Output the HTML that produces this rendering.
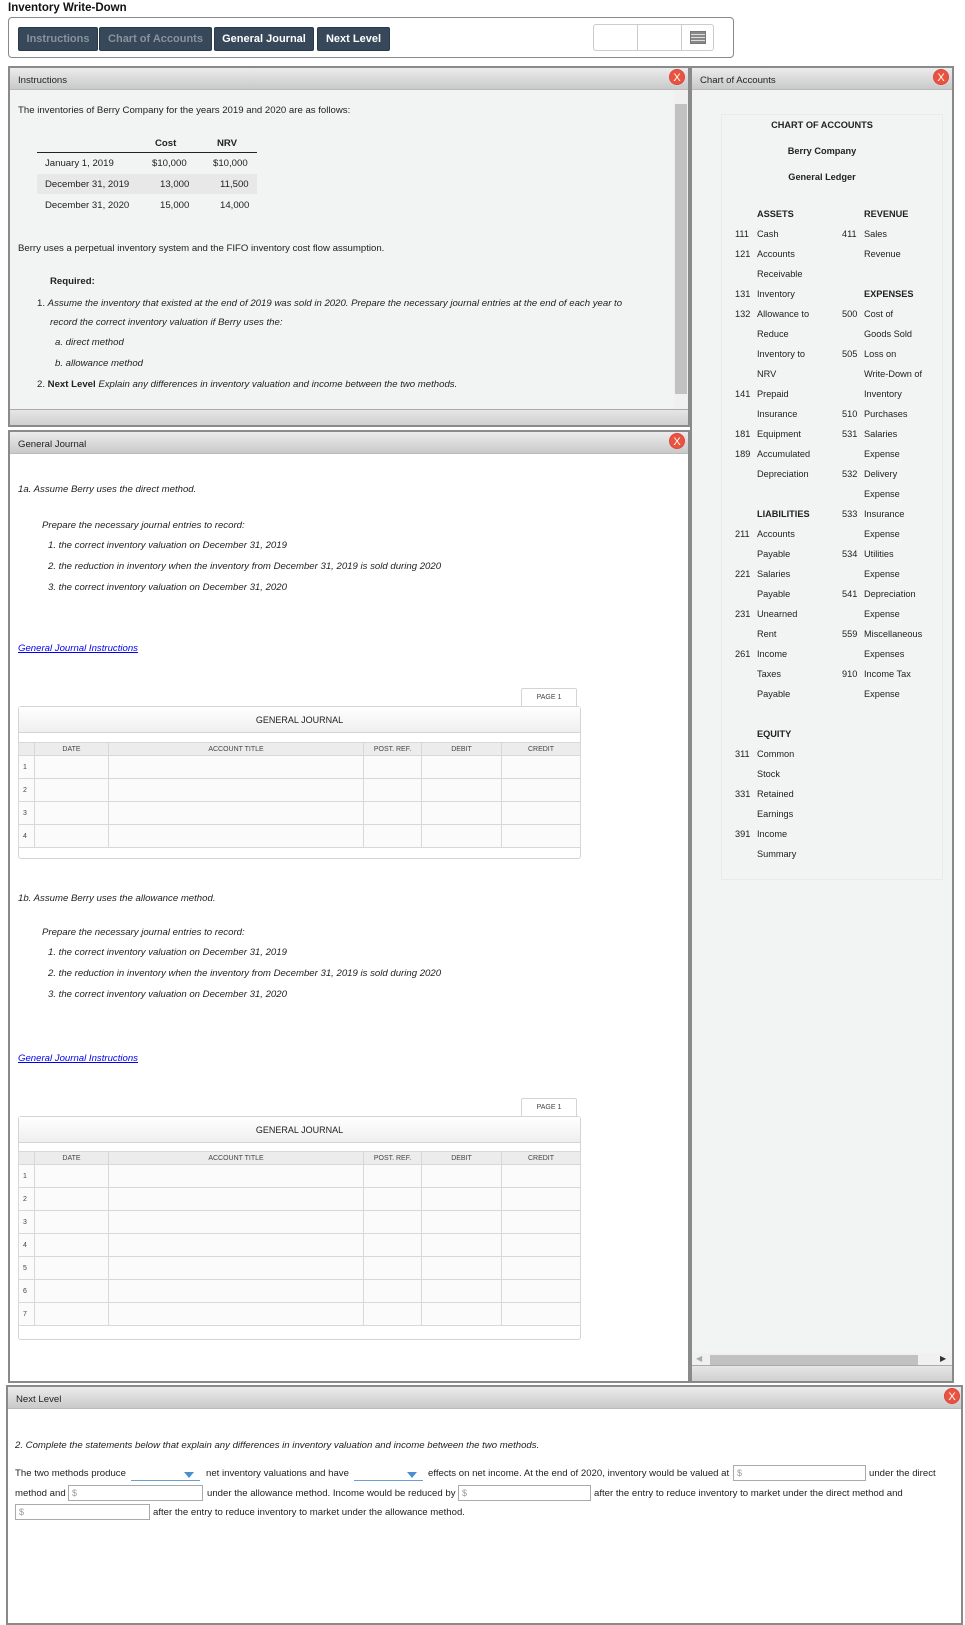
<!DOCTYPE html>
<html><head><meta charset="utf-8"><style>
*{margin:0;padding:0;box-sizing:border-box}
body{width:965px;height:1620px;position:relative;background:#fff;font-family:"Liberation Sans",Arial,sans-serif;font-size:9.6px;color:#222;overflow:hidden}
.a{position:absolute;white-space:nowrap}
.panel{position:absolute;border:2px solid #8a8a8a;}
.hdr{position:absolute;left:0;right:0;top:0;height:22px;background:linear-gradient(#ececec,#c9c9c9);border-bottom:1px solid #bbb;font-size:9.6px;padding:7px 0 0 8px;color:#222}
.x{position:absolute;width:16px;height:16px;border-radius:50%;background:#e9543f;color:#fff;font-size:11px;text-align:center;line-height:16px;border:1px solid #d44}
.btn{position:absolute;top:27px;height:24px;background:#364859;border:1px solid #2a3a48;border-radius:2px;font-size:11px;font-weight:bold;line-height:22px;text-align:center}
.i{font-style:italic}
.gj{position:absolute;border:1px solid #d4d4d4;border-radius:3px;background:#fff}
.gj .h{position:absolute;left:0;right:0;top:0;height:26px;background:linear-gradient(#fff,#efefef);border-bottom:1px solid #d4d4d4;text-align:center;font-size:9px;line-height:26px}
.tab{position:absolute;border:1px solid #d4d4d4;border-bottom:none;background:#fff;font-size:7px;text-align:center;line-height:18px;color:#444;border-radius:2px 2px 0 0}
table.t{position:absolute;border-collapse:collapse;font-size:7px;color:#444}
table.t td{border:1px solid #d8d8d8;background:#fbfbfb;height:23px;text-align:center;vertical-align:middle}
table.t tr.ch td{height:13px;background:#ececec}
table.t td.n{text-align:left;padding-left:4px;width:16px}
.coa{position:absolute;font-size:9.2px;color:#222}
.inp{position:absolute;height:16px;border:1px solid #aaa;background:#fff;font-size:9px;color:#999;padding:2px 3px}
.dd{position:absolute;height:14px;border-bottom:1px solid #6a9fd0}
.dd:after{content:"";position:absolute;right:6px;top:5px;border-left:5px solid transparent;border-right:5px solid transparent;border-top:6px solid #4a8fd0}
</style></head><body>
<div class="a" style="left:8px;top:2px;font-size:11.5px;font-weight:bold;color:#111">Inventory Write-Down</div>
<div style="position:absolute;left:8px;top:17px;width:726px;height:41px;border:1px solid #888;border-radius:4px"></div>
<div class="btn" style="left:18px;width:80px;color:#8a939d">Instructions</div>
<div class="btn" style="left:99px;width:113px;color:#8a939d">Chart of Accounts</div>
<div class="btn" style="left:214px;width:100px;color:#fff">General Journal</div>
<div class="btn" style="left:317px;width:73px;color:#fff">Next Level</div>
<div style="position:absolute;left:593px;top:24px;width:121px;height:27px;border:1px solid #ccc;border-radius:3px;background:#fff">
<div style="position:absolute;left:43px;top:0;width:1px;height:25px;background:#ccc"></div>
<div style="position:absolute;left:87px;top:0;width:1px;height:25px;background:#ccc"></div>
<div style="position:absolute;left:96px;top:6px;width:16px;height:13px;border:1px solid #777;background:repeating-linear-gradient(#888 0 2px,#ddd 2px 3px)"></div>
</div>

<!-- Instructions -->
<div class="panel" style="left:8px;top:66px;width:682px;height:361px;background:#f2f3f3">
<div class="hdr">Instructions</div><div class="x" style="left:659px;top:1px">X</div>
<div style="position:absolute;left:664px;top:22px;width:14px;height:320px;background:#f0f0f0"><div style="position:absolute;left:1px;top:14px;width:12px;height:290px;background:#c1c1c1"></div></div>
<div style="position:absolute;left:0;right:0;bottom:0;height:16px;background:linear-gradient(#e6e6e6,#d0d0d0);border-top:1px solid #aaa"></div>
</div>
<div class="a" style="left:18px;top:105px">The inventories of Berry Company for the years 2019 and 2020 are as follows:</div>
<div class="a" style="left:155px;top:138px;font-weight:bold">Cost</div>
<div class="a" style="left:217px;top:138px;font-weight:bold">NRV</div>
<div style="position:absolute;left:37px;top:152px;width:220px;height:1px;background:#222"></div>
<div style="position:absolute;left:37px;top:174px;width:220px;height:20px;background:#e8e8e8"></div>
<div class="a" style="left:45px;top:158px">January 1, 2019</div><div class="a" style="left:152px;top:158px">$10,000</div><div class="a" style="left:213px;top:158px">$10,000</div>
<div class="a" style="left:45px;top:179px">December 31, 2019</div><div class="a" style="left:160px;top:179px">13,000</div><div class="a" style="left:220px;top:179px">11,500</div>
<div class="a" style="left:45px;top:200px">December 31, 2020</div><div class="a" style="left:160px;top:200px">15,000</div><div class="a" style="left:220px;top:200px">14,000</div>
<div class="a" style="left:18px;top:243px">Berry uses a perpetual inventory system and the FIFO inventory cost flow assumption.</div>
<div class="a" style="left:50px;top:276px;font-weight:bold">Required:</div>
<div class="a" style="left:37px;top:298px">1. <span class="i">Assume the inventory that existed at the end of 2019 was sold in 2020. Prepare the necessary journal entries at the end of each year to</span></div>
<div class="a i" style="left:50px;top:317px">record the correct inventory valuation if Berry uses the:</div>
<div class="a i" style="left:55px;top:337px">a. direct method</div>
<div class="a i" style="left:55px;top:358px">b. allowance method</div>
<div class="a" style="left:37px;top:379px">2. <b>Next Level</b> <span class="i">Explain any differences in inventory valuation and income between the two methods.</span></div>

<!-- General Journal -->
<div class="panel" style="left:8px;top:430px;width:682px;height:953px;background:#fff">
<div class="hdr">General Journal</div><div class="x" style="left:659px;top:1px">X</div>
</div>
<div class="a i" style="left:18px;top:484px">1a. Assume Berry uses the direct method.</div>
<div class="a i" style="left:42px;top:520px">Prepare the necessary journal entries to record:</div>
<div class="a i" style="left:48px;top:540px">1. the correct inventory valuation on December 31, 2019</div>
<div class="a i" style="left:48px;top:561px">2. the reduction in inventory when the inventory from December 31, 2019 is sold during 2020</div>
<div class="a i" style="left:48px;top:582px">3. the correct inventory valuation on December 31, 2020</div>
<div class="a i" style="left:18px;top:643px;color:#00e;text-decoration:underline">General Journal Instructions</div>
<div class="tab" style="left:521px;top:688px;width:56px;height:19px">PAGE 1</div>
<div class="gj" style="left:18px;top:706px;width:563px;height:153px"><div class="h">GENERAL JOURNAL</div></div>
<table class="t" style="left:18px;top:742px;width:563px">
<tr class="ch"><td></td><td style="width:74px">DATE</td><td style="width:255px">ACCOUNT TITLE</td><td style="width:58px">POST. REF.</td><td style="width:80px">DEBIT</td><td>CREDIT</td></tr>
<tr><td class="n">1</td><td></td><td></td><td></td><td></td><td></td></tr>
<tr><td class="n">2</td><td></td><td></td><td></td><td></td><td></td></tr>
<tr><td class="n">3</td><td></td><td></td><td></td><td></td><td></td></tr>
<tr><td class="n">4</td><td></td><td></td><td></td><td></td><td></td></tr>
</table>

<div class="a i" style="left:18px;top:893px">1b. Assume Berry uses the allowance method.</div>
<div class="a i" style="left:42px;top:927px">Prepare the necessary journal entries to record:</div>
<div class="a i" style="left:48px;top:947px">1. the correct inventory valuation on December 31, 2019</div>
<div class="a i" style="left:48px;top:968px">2. the reduction in inventory when the inventory from December 31, 2019 is sold during 2020</div>
<div class="a i" style="left:48px;top:989px">3. the correct inventory valuation on December 31, 2020</div>
<div class="a i" style="left:18px;top:1053px;color:#00e;text-decoration:underline">General Journal Instructions</div>
<div class="tab" style="left:521px;top:1098px;width:56px;height:19px">PAGE 1</div>
<div class="gj" style="left:18px;top:1116px;width:563px;height:224px"><div class="h">GENERAL JOURNAL</div></div>
<table class="t" style="left:18px;top:1151px;width:563px">
<tr class="ch"><td></td><td style="width:74px">DATE</td><td style="width:255px">ACCOUNT TITLE</td><td style="width:58px">POST. REF.</td><td style="width:80px">DEBIT</td><td>CREDIT</td></tr>
<tr><td class="n">1</td><td></td><td></td><td></td><td></td><td></td></tr>
<tr><td class="n">2</td><td></td><td></td><td></td><td></td><td></td></tr>
<tr><td class="n">3</td><td></td><td></td><td></td><td></td><td></td></tr>
<tr><td class="n">4</td><td></td><td></td><td></td><td></td><td></td></tr>
<tr><td class="n">5</td><td></td><td></td><td></td><td></td><td></td></tr>
<tr><td class="n">6</td><td></td><td></td><td></td><td></td><td></td></tr>
<tr><td class="n">7</td><td></td><td></td><td></td><td></td><td></td></tr>
</table>

<!-- Chart of Accounts -->
<div class="panel" style="left:690px;top:66px;width:264px;height:1317px;background:#f2f3f3">
<div class="hdr">Chart of Accounts</div><div class="x" style="left:241px;top:1px">X</div>
<div style="position:absolute;left:29px;top:46px;width:222px;height:766px;border:1px solid #eaeaea"></div>
<div style="position:absolute;left:0;right:0;top:1285px;height:14px;background:#f0f0f0"><div style="position:absolute;left:18px;top:2px;width:208px;height:12px;background:#c1c1c1"></div><div class="a" style="left:4px;top:1px;color:#aaa;font-size:8px">◀</div><div class="a" style="left:248px;top:1px;color:#333;font-size:8px">▶</div></div>
<div style="position:absolute;left:0;right:0;bottom:0;height:16px;background:linear-gradient(#e6e6e6,#d0d0d0);border-top:1px solid #aaa"></div>
</div>
<div class="coa" style="left:690px;width:264px;top:120px;text-align:center;font-weight:bold">CHART OF ACCOUNTS</div>
<div class="coa" style="left:690px;width:264px;top:146px;text-align:center;font-weight:bold">Berry Company</div>
<div class="coa" style="left:690px;width:264px;top:172px;text-align:center;font-weight:bold">General Ledger</div>
<div id="coa"></div>
<script>
var L=[[-1,"","ASSETS",1],[0,"111","Cash"],[1,"121","Accounts"],[2,"","Receivable"],[3,"131","Inventory"],[4,"132","Allowance to"],[5,"","Reduce"],[6,"","Inventory to"],[7,"","NRV"],[8,"141","Prepaid"],[9,"","Insurance"],[10,"181","Equipment"],[11,"189","Accumulated"],[12,"","Depreciation"],[14,"","LIABILITIES",1],[15,"211","Accounts"],[16,"","Payable"],[17,"221","Salaries"],[18,"","Payable"],[19,"231","Unearned"],[20,"","Rent"],[21,"261","Income"],[22,"","Taxes"],[23,"","Payable"],[25,"","EQUITY",1],[26,"311","Common"],[27,"","Stock"],[28,"331","Retained"],[29,"","Earnings"],[30,"391","Income"],[31,"","Summary"]];
var R=[[-1,"","REVENUE",1],[0,"411","Sales"],[1,"","Revenue"],[3,"","EXPENSES",1],[4,"500","Cost of"],[5,"","Goods Sold"],[6,"505","Loss on"],[7,"","Write-Down of"],[8,"","Inventory"],[9,"510","Purchases"],[10,"531","Salaries"],[11,"","Expense"],[12,"532","Delivery"],[13,"","Expense"],[14,"533","Insurance"],[15,"","Expense"],[16,"534","Utilities"],[17,"","Expense"],[18,"541","Depreciation"],[19,"","Expense"],[20,"559","Miscellaneous"],[21,"","Expenses"],[22,"910","Income Tax"],[23,"","Expense"]];
var h="";
function add(a,nx,tx){a.forEach(function(r){var y=229+20*r[0];if(r[1])h+='<div class="coa" style="left:'+nx+'px;top:'+y+'px">'+r[1]+'</div>';h+='<div class="coa" style="left:'+tx+'px;top:'+y+'px;'+(r[3]?'font-weight:bold':'')+'">'+r[2]+'</div>';});}
add(L,735,757);add(R,842,864);
document.getElementById("coa").innerHTML=h;
</script>

<!-- Next Level -->
<div class="panel" style="left:6px;top:1385px;width:957px;height:240px;background:#fff">
<div class="hdr">Next Level</div><div class="x" style="left:936px;top:1px">X</div>
</div>
<div class="a i" style="left:15px;top:1440px">2. Complete the statements below that explain any differences in inventory valuation and income between the two methods.</div>
<div class="a" style="left:15px;top:1468px">The two methods produce</div>
<div class="dd" style="left:131px;top:1467px;width:69px"></div>
<div class="a" style="left:206px;top:1468px">net inventory valuations and have</div>
<div class="dd" style="left:354px;top:1467px;width:69px"></div>
<div class="a" style="left:428px;top:1468px">effects on net income. At the end of 2020, inventory would be valued at</div>
<div class="inp" style="left:733px;top:1465px;width:133px">$</div>
<div class="a" style="left:869px;top:1468px">under the direct</div>
<div class="a" style="left:15px;top:1488px">method and</div>
<div class="inp" style="left:68px;top:1485px;width:135px">$</div>
<div class="a" style="left:207px;top:1488px">under the allowance method. Income would be reduced by</div>
<div class="inp" style="left:458px;top:1485px;width:133px">$</div>
<div class="a" style="left:594px;top:1488px">after the entry to reduce inventory to market under the direct method and</div>
<div class="inp" style="left:15px;top:1504px;width:135px">$</div>
<div class="a" style="left:153px;top:1507px">after the entry to reduce inventory to market under the allowance method.</div>
</body></html>
